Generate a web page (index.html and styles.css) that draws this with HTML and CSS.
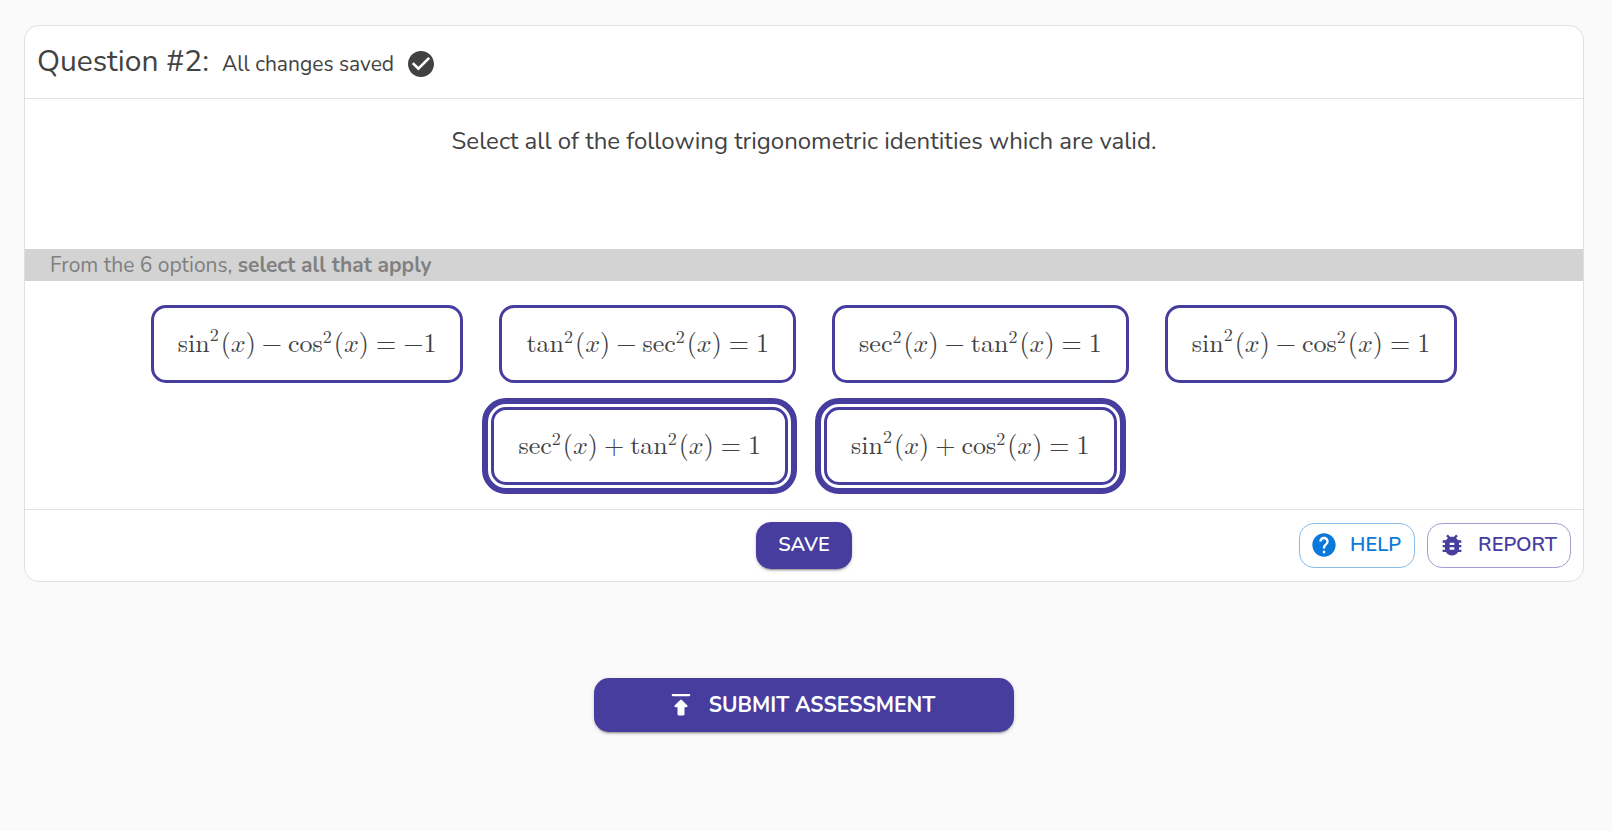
FILE: index.html
```html
<!DOCTYPE html>
<html lang="en">
<head>
    <meta charset="UTF-8">
    <meta name="viewport" content="width=device-width, initial-scale=1.0">
    <title>Assessment</title>
    <link rel="stylesheet" href="styles.css">
</head>
<body>
    <main class="page">
        <section class="card">
            <header class="card-header">
                <h1 class="title">Question #2:</h1>
                <span class="status">All changes saved</span>
                <svg class="status-icon" viewBox="2 2 20 20" aria-hidden="true"><path d="M12 2C6.48 2 2 6.48 2 12s4.480 10 10 10 10-4.480 10-10S17.520 2 12 2zm-2 15l-5-5 1.410-1.410L10 14.170l7.590-7.590L19 8l-9 9z"/></svg>
            </header>

            <p class="prompt">Select all of the following trigonometric identities which are valid.</p>

            <div class="hint">From the 6 options, <strong>select all that apply</strong></div>

            <div class="options">
                <button type="button" class="option" aria-pressed="false">sin<sup class="high">2</sup>(<math><mi>x</mi></math>)<span class="op">−</span>cos<sup>2</sup>(<math><mi>x</mi></math>)<span class="rel">=</span>−1</button>
                <button type="button" class="option" aria-pressed="false">tan<sup>2</sup>(<math><mi>x</mi></math>)<span class="op">−</span>sec<sup>2</sup>(<math><mi>x</mi></math>)<span class="rel">=</span>1</button>
                <button type="button" class="option" aria-pressed="false">sec<sup>2</sup>(<math><mi>x</mi></math>)<span class="op">−</span>tan<sup>2</sup>(<math><mi>x</mi></math>)<span class="rel">=</span>1</button>
                <button type="button" class="option" aria-pressed="false">sin<sup class="high">2</sup>(<math><mi>x</mi></math>)<span class="op">−</span>cos<sup>2</sup>(<math><mi>x</mi></math>)<span class="rel">=</span>1</button>
                <button type="button" class="option" aria-pressed="true">sec<sup>2</sup>(<math><mi>x</mi></math>)<span class="op">+</span>tan<sup>2</sup>(<math><mi>x</mi></math>)<span class="rel">=</span>1</button>
                <button type="button" class="option" aria-pressed="true">sin<sup class="high">2</sup>(<math><mi>x</mi></math>)<span class="op">+</span>cos<sup>2</sup>(<math><mi>x</mi></math>)<span class="rel">=</span>1</button>
            </div>

            <footer class="card-footer">
                <button type="button" class="btn btn-filled save">SAVE</button>
                <div class="footer-right">
                    <button type="button" class="btn btn-help">
                        <svg class="icon" viewBox="0 0 24 24" aria-hidden="true"><path d="M12 2C6.480 2 2 6.480 2 12s4.480 10 10 10 10-4.480 10-10S17.520 2 12 2zm1 17h-2v-2h2v2zm2.070-7.750l-.9.920C13.450 12.900 13 13.500 13 15h-2v-.5c0-1.100.450-2.100 1.170-2.830l1.240-1.260c.370-.360.590-.860.590-1.410 0-1.100-.9-2-2-2s-2 .9-2 2H8c0-2.210 1.790-4 4-4s4 1.790 4 4c0 .880-.360 1.680-.930 2.250z"/></svg>
                        HELP
                    </button>
                    <button type="button" class="btn btn-report">
                        <svg class="icon" viewBox="0 0 24 24" aria-hidden="true"><path d="M20 8h-2.810c-.450-.780-1.070-1.450-1.820-1.960L17 4.410 15.590 3l-2.170 2.170C12.960 5.060 12.490 5 12 5c-.490 0-.960.060-1.410.170L8.410 3 7 4.410l1.620 1.630C7.880 6.550 7.260 7.220 6.810 8H4v2h2.090c-.050.330-.090.660-.090 1v1H4v2h2v1c0 .340.040.670.090 1H4v2h2.810c1.040 1.790 2.970 3 5.190 3s4.150-1.210 5.190-3H20v-2h-2.090c.050-.330.090-.660.090-1v-1h2v-2h-2v-1c0-.340-.040-.670-.090-1H20V8zm-6 8h-4v-2h4v2zm0-4h-4v-2h4v2z"/></svg>
                        REPORT
                    </button>
                </div>
            </footer>
        </section>

        <button type="button" class="btn btn-filled submit">
            <svg class="icon" viewBox="0 0 24 24" aria-hidden="true"><path d="M4 3.500c0-.550.450-1 1-1h14c.550 0 1 .450 1 1s-.450 1-1 1H5c-.550 0-1-.450-1-1zM7.400 14H9v6c0 .550.450 1 1 1h4c.550 0 1-.450 1-1v-6h1.600c.890 0 1.330-1.080.700-1.700l-4.600-4.600a1 1 0 0 0-1.400 0l-4.600 4.600c-.630.620-.190 1.700.700 1.700z"/></svg>
            SUBMIT ASSESSMENT
        </button>
    </main>
</body>
</html>
```
FILE: styles.css
```css
* {
    box-sizing: border-box;
}
body {
    margin: 0;
    background: #fafafa;
    color: #424242;
    font-family: Nunito, "Noto Sans", sans-serif;
}
.page {
    display: flex;
    flex-direction: column;
    align-items: center;
    padding: 25px 28px 40px 24px;
}
.card {
    width: 100%;
    background: #fff;
    border: 1px solid #e0e0e0;
    border-radius: 15px;
}
.card-header {
    display: flex;
    align-items: center;
    height: 73px;
    padding: 0 12px 2px;
    border-bottom: 1px solid #e0e0e0;
}
.title {
    margin: 0 13px 0 0;
    font-size: 30px;
    font-weight: 400;
}
.status {
    font-size: 21px;
    padding-top: 5px;
}
.status-icon {
    width: 26px;
    height: 26px;
    margin: 5px 0 0 14px;
    fill: #424242;
}
.prompt {
    min-height: 150px;
    margin: 0;
    padding: 24px;
    font-size: 24px;
    line-height: 36px;
    text-align: center;
}
.hint {
    padding: 0 25px;
    background: #d3d3d3;
    color: gray;
    font-size: 21px;
    line-height: 32px;
}
.options {
    display: flex;
    flex-wrap: wrap;
    justify-content: center;
    gap: 24px 36px;
    padding: 24px 100px;
}
.option {
    padding: 18px 24px 22px;
    background: #fff;
    border: 3px solid #463d9f;
    border-radius: 15px;
    color: #424242;
    font-family: KaTeX_Main, "Latin Modern Roman", "Liberation Serif", serif;
    font-size: 26px;
    line-height: 32px;
    white-space: nowrap;
    cursor: pointer;
}
.option[aria-pressed="true"] {
    outline: 6px solid #463d9f;
    outline-offset: 3px;
}
.option math {
    font-family: "Latin Modern Math", "Liberation Serif", serif;
    font-size: 26px;
    line-height: 0;
}
.option sup {
    margin-right: 2px;
    font-size: 18px;
    line-height: 0;
    vertical-align: 9px;
}
.option .high {
    vertical-align: 11px;
}
.op {
    margin: 0 6px;
}
.rel {
    margin: 0 7px;
}
.card-footer {
    display: grid;
    grid-template-columns: 1fr auto 1fr;
    align-items: center;
    padding: 12px;
    border-top: 1px solid #e0e0e0;
}
.btn {
    display: flex;
    align-items: center;
    justify-content: center;
    border-radius: 15px;
    font-family: inherit;
    font-size: 20px;
    font-weight: 600;
    cursor: pointer;
}
.btn-filled {
    background: #463d9f;
    border: 0;
    color: #fff;
    box-shadow: 0 3px 1px -2px rgba(0,0,0,0.2), 0 2px 2px rgba(0,0,0,0.14), 0 1px 5px rgba(0,0,0,0.12);
}
.icon {
    width: 28px;
    height: 28px;
    fill: currentColor;
}
.save {
    grid-column: 2;
    width: 96px;
    height: 47px;
    padding: 0 0 2px;
}
.footer-right {
    display: flex;
    gap: 12px;
    justify-content: flex-end;
}
.btn-help, .btn-report {
    gap: 12px;
    height: 45px;
    padding: 0 13px 2px 10px;
    background: #fff;
}
.btn-help {
    border: 1px solid #85bcea;
    color: #0b79d9;
}
.btn-report {
    border: 1px solid #a29ecf;
    color: #463d9f;
}
.submit {
    gap: 14px;
    width: 420px;
    max-width: 100%;
    height: 54px;
    margin-top: 96px;
    padding: 0 6px 1px 0;
    font-size: 21px;
    font-weight: 700;
}
```
